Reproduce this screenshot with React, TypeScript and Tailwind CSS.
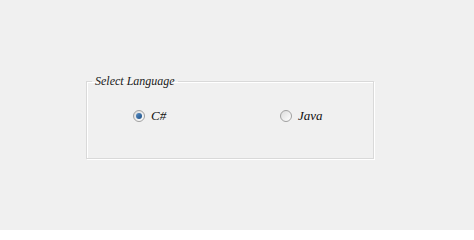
import React, { useState } from "react"

export default function App() {
  const [lang, setLang] = useState("csharp")

  return (
    <div className="w-[474px] h-[230px] bg-[#f0f0f0] pt-[74px] pl-[86px]">
      <fieldset className="w-[288px] h-[85px] border border-[#d9d9d9] shadow-[inset_1px_1px_0_#ffffff,1px_1px_0_#ffffff] px-0 m-0">
        <legend
          className="ml-[5px] px-[3px] text-[12px] leading-[15px] italic text-[#1a1a1a]"
          style={{ fontFamily: '"Liberation Serif", serif' }}
        >
          Select Language
        </legend>
        <div
          className="flex items-center pt-[17px] pl-[46px] text-[13px] italic text-[#111]"
          style={{ fontFamily: '"Liberation Serif", serif' }}
        >
          <label className="flex items-center gap-[6px] w-[147px]" onClick={() => setLang("csharp")}>
            <Radio checked={lang === "csharp"} />
            <span>C#</span>
          </label>
          <label className="flex items-center gap-[6px]" onClick={() => setLang("java")}>
            <Radio checked={lang === "java"} />
            <span>Java</span>
          </label>
        </div>
      </fieldset>
    </div>
  )
}

function Radio({ checked }: { checked: boolean }) {
  return (
    <span className="w-[12px] h-[12px] rounded-full border border-[#a0a0a0] bg-gradient-to-br from-[#dcdcdc] to-[#ffffff] flex items-center justify-center">
      {checked && (
        <span className="w-[6px] h-[6px] rounded-full bg-gradient-to-br from-[#5a8fc4] to-[#1c4f86]" />
      )}
    </span>
  )
}
